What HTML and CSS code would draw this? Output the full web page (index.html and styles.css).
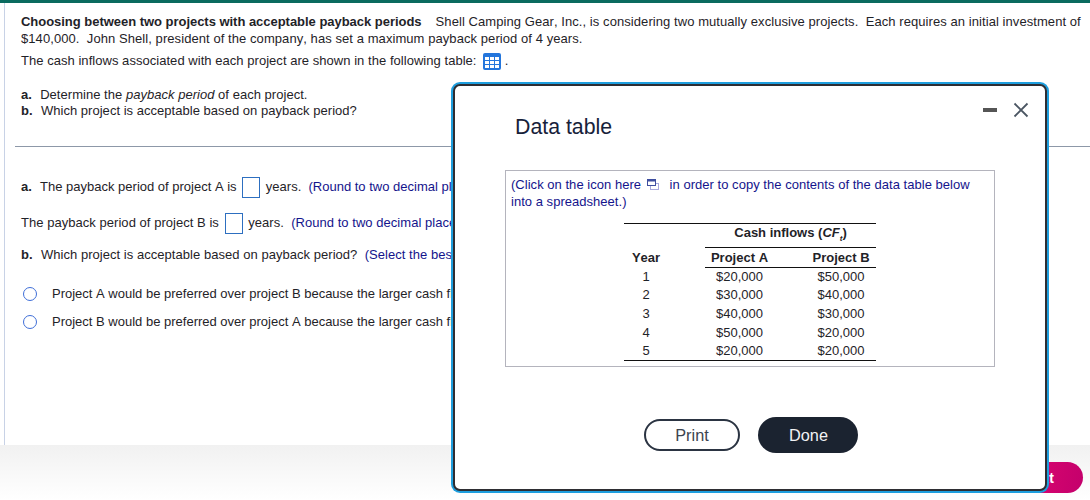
FILE: index.html
```html
<!DOCTYPE html>
<html lang="en">
<head>
<meta charset="utf-8">
<title>Data table</title>
<link rel="stylesheet" href="styles.css">
</head>
<body>
<div class="topbar"></div>
<div class="page">
  <main class="content">
    <section class="problem">
      <p class="intro"><strong>Choosing between two projects with acceptable payback periods</strong>&nbsp;&nbsp; Shell Camping Gear, Inc., is considering two mutually exclusive projects.&nbsp; Each requires an initial investment of $140,000.&nbsp; John Shell, president of the company, has set a maximum payback period of 4 years.</p>
      <p class="intro2">The cash inflows associated with each project are shown in the following table:
        <svg class="grid-icon" width="18" height="17" viewBox="0 0 18 17"><rect width="18" height="17" rx="2" fill="#2476dc"/><g fill="#fff"><rect x="2" y="4" width="4" height="3"/><rect x="7" y="4" width="4" height="3"/><rect x="12" y="4" width="4" height="3"/><rect x="2" y="8" width="4" height="3"/><rect x="7" y="8" width="4" height="3"/><rect x="12" y="8" width="4" height="3"/><rect x="2" y="12" width="4" height="3"/><rect x="7" y="12" width="4" height="3"/><rect x="12" y="12" width="4" height="3"/></g></svg> .</p>
      <ol class="tasks">
        <li><b class="tag">a.</b>&nbsp; Determine the <i>payback period</i> of each project.</li>
        <li><b class="tag">b.</b>&nbsp; Which project is acceptable based on payback period?</li>
      </ol>
    </section>
    <hr class="rule">
    <section class="answers">
      <p class="line line-a"><b class="tag">a.</b>&nbsp; The payback period of project A is <span class="blank"></span> years.&nbsp; <span class="hint">(Round to two decimal places as needed.)</span></p>
      <p class="line line-b">The payback period of project B is <span class="blank"></span> years.&nbsp; <span class="hint">(Round to two decimal places as needed.)</span></p>
      <p class="line line-c"><b class="tag">b.</b>&nbsp; Which project is acceptable based on payback period?&nbsp; <span class="hint">(Select the best answer below.)</span></p>
      <div class="option"><span class="radio"></span><span>Project A would be preferred over project B because the larger cash flows occur earlier.</span></div>
      <div class="option"><span class="radio"></span><span>Project B would be preferred over project A because the larger cash flows occur earlier.</span></div>
    </section>
  </main>
</div>
<footer class="footer"><button class="next">Next</button></footer>

<div class="dialog">
  <div class="win-controls">
    <span class="minimize"></span>
    <svg class="close" width="16" height="16" viewBox="0 0 16 16"><path d="M1.5 1.5L14.5 14.5M14.5 1.5L1.5 14.5" stroke="#4a5562" stroke-width="1.8" fill="none"/></svg>
  </div>
  <h1 class="title">Data table</h1>
  <div class="panel">
    <p class="copy">(Click on the icon here <svg class="copy-icon" width="12" height="11" viewBox="0 0 12 11"><rect x="3.5" y="4.5" width="8" height="6" fill="none" stroke="#a9a9dc"/><rect x="0.5" y="0.5" width="8" height="6" fill="#fff" stroke="#3f4f9f"/><rect x="0.5" y="0.5" width="8" height="2" fill="#3f4f9f"/></svg>&nbsp;&nbsp; in order to copy the contents of the data table below into a spreadsheet.)</p>
    <table class="data">
      <colgroup><col class="c1"><col class="c2"><col class="c3"></colgroup>
      <thead>
        <tr class="r1"><th></th><th colspan="2" class="group">Cash inflows (<i>CF<sub>t</sub></i>)</th></tr>
        <tr class="r2"><th class="year">Year</th><th class="sub">Project A</th><th class="sub pb">Project B</th></tr>
      </thead>
      <tbody>
        <tr><td class="yr">1</td><td>$20,000</td><td class="pb">$50,000</td></tr>
        <tr><td class="yr">2</td><td>$30,000</td><td class="pb">$40,000</td></tr>
        <tr><td class="yr">3</td><td>$40,000</td><td class="pb">$30,000</td></tr>
        <tr><td class="yr">4</td><td>$50,000</td><td class="pb">$20,000</td></tr>
        <tr><td class="yr">5</td><td>$20,000</td><td class="pb">$20,000</td></tr>
      </tbody>
    </table>
  </div>
  <div class="actions">
    <button class="btn print">Print</button>
    <button class="btn done">Done</button>
  </div>
</div>
</body>
</html>
```
FILE: styles.css
```css
* { box-sizing: border-box; }
html, body { margin: 0; padding: 0; }
body {
  width: 1090px; height: 500px; overflow: hidden; position: relative;
  background: #fff; color: #1f2328;
  font-family: "Liberation Sans", Arial, sans-serif; font-size: 13px; line-height: 16px;
  font-kerning: none;
}
p { margin: 0; }
.topbar { height: 3px; background: #0a6b5f; }
.page { height: 442px; padding-left: 4px; overflow: hidden; }
.content { height: 442px; border-left: 1px solid #c8d2e6; padding-top: 10px; }
.problem { padding: 0 6px 0 16px; }
.intro { line-height: 17px; letter-spacing: 0.07px; }
.intro strong { letter-spacing: -0.03px; margin-right: 3px; }
.intro2 { margin-top: 5px; line-height: 18px; letter-spacing: 0.04px; }
.grid-icon { vertical-align: -5px; margin-left: 3px; }
.tasks { list-style: none; margin: 17px 0 0; padding: 0; letter-spacing: 0.03px; }
.tag { margin-right: 1px; }
.rule { margin: 27px 0 0 10px; border: 0; border-top: 1px solid #8d98a8; height: 0; }
.answers { padding-left: 16px; white-space: nowrap; }
.line-a { margin-top: 28px; height: 24px; line-height: 24px; }
.line-b { margin-top: 12px; height: 24px; line-height: 24px; letter-spacing: 0.04px; }
.line-c { margin-top: 8px; height: 24px; line-height: 24px; letter-spacing: 0.04px; }
.hint { color: #14148c; }
.blank { display: inline-block; width: 18px; height: 21px; border: 1px solid #2d6fc0; vertical-align: middle; background: #fff; margin: 0 2px; }
.option { display: flex; align-items: center; height: 28px; margin-left: 2px; }
.line-c + .option { margin-top: 13px; }
.radio { width: 14px; height: 14px; border: 1.5px solid #3f6fd8; border-radius: 50%; margin-right: 15px; flex: none; }
.footer { position: relative; height: 55px; background: linear-gradient(#f1f1f1, #fff); }
.next {
  position: absolute; right: 7px; top: 17px; width: 100px; height: 31px; border: 0; border-radius: 16px;
  background: linear-gradient(100deg, #ea0a72, #c4006c); color: #fff; font: bold 14px "Liberation Sans", sans-serif;
  text-align: right; padding-right: 29px;
}
.dialog {
  position: absolute; left: 453px; top: 84px; width: 594px; height: 407px;
  background: #fff; border: 2px solid #2e2e33; border-radius: 7px;
  box-shadow: 0 0 0 2px #1e9ede;
  display: flex; flex-direction: column;
}
.win-controls { position: absolute; right: 16px; top: 16px; display: flex; align-items: center; gap: 16px; }
.minimize { width: 14px; height: 4px; background: #555; }
.title { margin: 29px 0 0 60px; font-size: 21.3px; font-weight: 400; line-height: 24px; color: #16213a; }
.panel { margin: 31px 0 0 50px; width: 490px; height: 197px; border: 1px solid #b4b4bd; padding: 5px 5px 0; }
.copy { color: #14148c; line-height: 17px; letter-spacing: 0.03px; }
.copy-icon { vertical-align: -1px; margin: 0 0 0 2px; }
.data { border-collapse: collapse; margin: 13px 0 0 113px; width: 252px; color: #1f2328; table-layout: fixed; border-top: 1px solid #111; border-bottom: 1px solid #111; }
.c1 { width: 81px; }
.c2 { width: 69px; }
.c3 { width: 102px; }
.data th, .data td { padding: 0; text-align: center; line-height: 14px; }
.data tbody td { height: 18.6px; }
.data .yr, .data .year { padding-right: 37px; }
.data .pb { padding-left: 32px; }
.r1 th { height: 24px; vertical-align: top; padding-top: 2px; }
.group { border-bottom: 1px solid #111; }
.r2 th { height: 20px; }
.r2 .sub { border-bottom: 1px solid #111; }
sub { font-size: 8px; line-height: 0; }
.actions { position: absolute; left: 189px; top: 331px; display: flex; align-items: center; gap: 18px; }
.btn { border-radius: 18px; font: 16.3px "Liberation Sans", sans-serif; padding: 0; }
.print { width: 96px; height: 32px; background: #fff; border: 2px solid #2b3442; color: #3c4450; padding-top: 1px; }
.done { width: 100px; height: 36px; background: #1b2330; border: 0; color: #f1f2f4; padding-left: 1px; }
```
